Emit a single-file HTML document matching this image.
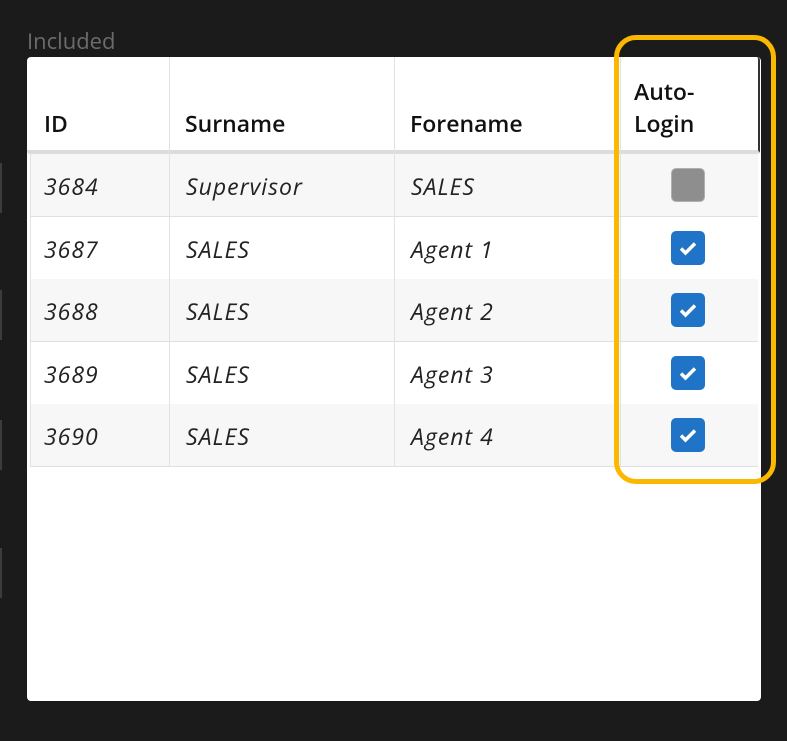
<!DOCTYPE html>
<html><head><style>
body{margin:0;width:787px;height:741px;background:#1b1b1b;position:relative;overflow:hidden;font-family:"Open Sans","Liberation Sans",sans-serif}
.bar{position:absolute;left:0;width:2px;height:50px;background:#3c3c3c}
.lbl{position:absolute;left:27px;top:26px;font-size:22px;color:#6b6b6b}
.panel{position:absolute;left:27px;top:57px;width:734px;height:644px;background:#fff;border-radius:4px}
.hdr{position:absolute;left:0;top:0;width:731px;height:93px;border-bottom:4px solid #dcdcdc;border-right:2px solid #333;border-radius:3px}
.h{position:absolute;font-size:23px;color:#111;font-weight:600}
.row{position:absolute;left:3px;width:728px;height:62px;border-bottom:1px solid #e0e0e0;font-size:23px;letter-spacing:1px;font-style:italic;color:#222}
.row span{position:absolute;top:16px}
.vl{position:absolute;top:0;width:1px;height:409px;background:#e2e2e2}
.cb{position:absolute;left:641px;top:14px;width:34px;height:34px;border-radius:5px;background:#1f74c8}
.cb.g{background:#8e8e8e;border:1px solid #b0b0b0;width:32px;height:32px}
.hl{position:absolute;left:614px;top:35px;width:152px;height:439px;border:5px solid #fbb800;border-radius:22px}
</style></head><body>
<div class="bar" style="top:163px"></div><div class="bar" style="top:290px"></div><div class="bar" style="top:420px"></div><div class="bar" style="top:548px"></div>
<div class="lbl">Included</div>
<div class="panel">
<div class="hdr"></div>
<div class="h" style="left:17px;top:50px">ID</div>
<div class="h" style="left:158px;top:50px">Surname</div>
<div class="h" style="left:383px;top:50px">Forename</div>
<div class="h" style="left:607px;top:18px;line-height:32px">Auto-<br>Login</div>
<div class="row" style="top:97px;background:#f7f7f7"><span style="left:14px">3684</span><span style="left:156px">Supervisor</span><span style="left:381px">SALES</span><div class="cb g"></div></div>
<div class="row" style="top:160px;background:#fff"><span style="left:14px">3687</span><span style="left:156px">SALES</span><span style="left:381px">Agent 1</span><div class="cb"><svg width="34" height="34"><path d="M10 17.5l4.5 4.5L24 12.5" stroke="#fff" stroke-width="3.5" fill="none"/></svg></div></div>
<div class="row" style="top:222px;background:#f7f7f7"><span style="left:14px">3688</span><span style="left:156px">SALES</span><span style="left:381px">Agent 2</span><div class="cb"><svg width="34" height="34"><path d="M10 17.5l4.5 4.5L24 12.5" stroke="#fff" stroke-width="3.5" fill="none"/></svg></div></div>
<div class="row" style="top:285px;background:#fff"><span style="left:14px">3689</span><span style="left:156px">SALES</span><span style="left:381px">Agent 3</span><div class="cb"><svg width="34" height="34"><path d="M10 17.5l4.5 4.5L24 12.5" stroke="#fff" stroke-width="3.5" fill="none"/></svg></div></div>
<div class="row" style="top:347px;background:#f7f7f7"><span style="left:14px">3690</span><span style="left:156px">SALES</span><span style="left:381px">Agent 4</span><div class="cb"><svg width="34" height="34"><path d="M10 17.5l4.5 4.5L24 12.5" stroke="#fff" stroke-width="3.5" fill="none"/></svg></div></div>
<div class="vl" style="left:142px"></div><div class="vl" style="left:367px"></div><div class="vl" style="left:593px"></div>
<div style="position:absolute;left:3px;top:97px;width:1px;height:312px;background:#e2e2e2"></div>
</div>
<div class="hl"></div>
</body></html>
